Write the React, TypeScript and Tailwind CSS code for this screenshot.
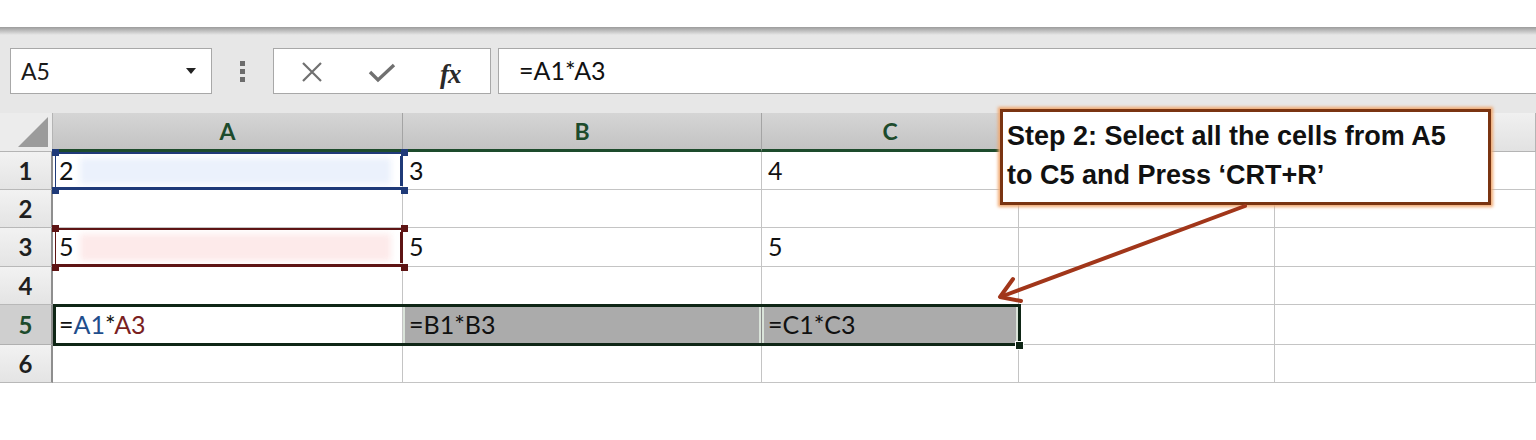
import React from 'react';

const cols = [53, 350, 359, 257, 256, 261];
const rowHeights = [38, 38, 39, 38, 40, 38];

const cellFont = { fontFamily: 'Lato, "Open Sans", sans-serif' };

type CellVal = React.ReactNode;

const data: CellVal[][] = [
  ['2', '3', '4', '', ''],
  ['', '', '', '', ''],
  ['5', '5', '5', '', ''],
  ['', '', '', '', ''],
  [
    <span key="f">
      =<span className="text-[#1f4e8c]">A1</span>*<span className="text-[#7a1f1f]">A3</span>
    </span>,
    '=B1*B3',
    '=C1*C3',
    '',
    '',
  ],
  ['', '', '', '', ''],
];

function Toolbar() {
  return (
    <div className="h-[86px] bg-[#e7e7e7]">
      <div className="h-[8px] bg-linear-to-b from-[#9c9c9c] to-[#e7e7e7]" />
      <div className="flex items-start pt-[13px]">
        {/* name box */}
        <div className="ml-[10px] w-[202px] h-[46px] border border-[#a8a8a8] bg-white flex items-center justify-between pl-[10px] pr-[14px]">
          <span className="text-[23px] text-[#1a1a1a]" style={cellFont}>A5</span>
          <svg width="12" height="8" viewBox="0 0 12 8">
            <path d="M1 1 L11 1 L6 7 Z" fill="#222" />
          </svg>
        </div>
        {/* dots */}
        <div className="w-[61px] h-[46px] flex flex-col items-center justify-center gap-[3px]">
          <div className="w-[5px] h-[5px] bg-[#6c6c6c]" />
          <div className="w-[5px] h-[5px] bg-[#6c6c6c]" />
          <div className="w-[5px] h-[5px] bg-[#6c6c6c]" />
        </div>
        {/* buttons */}
        <div className="w-[218px] h-[46px] border border-[#a8a8a8] bg-white relative">
          <svg className="absolute left-[26px] top-[11px]" width="24" height="24" viewBox="0 0 24 24">
            <path d="M3 3 L21 21 M21 3 L3 21" stroke="#707070" strokeWidth="2.2" fill="none" />
          </svg>
          <svg className="absolute left-[94px] top-[11px]" width="28" height="24" viewBox="0 0 28 24">
            <path d="M2 12 L10 20 L26 5" stroke="#707070" strokeWidth="3.4" fill="none" />
          </svg>
          <span
            className="absolute left-[166px] top-[5px] text-[27px] font-bold italic text-[#2a2a2a] tracking-[-1px]"
            style={{ fontFamily: '"Liberation Serif", serif' }}
          >
            fx
          </span>
        </div>
        {/* formula box */}
        <div className="ml-[7px] flex-1 -mr-[4px] h-[46px] border border-[#a8a8a8] bg-white flex items-center pl-[20px]">
          <span className="text-[25px] text-[#111]" style={cellFont}>=A1*A3</span>
        </div>
      </div>
    </div>
  );
}

function HeaderRow() {
  const names = ['A', 'B', 'C', '', ''];
  return (
    <div className="flex h-[39px]">
      <div
        className="relative h-full bg-[#ececec] border-r border-b border-[#b4b4b4]"
        style={{ width: cols[0] }}
      >
        <svg className="absolute right-[4px] bottom-[4px]" width="30" height="30" viewBox="0 0 30 30">
          <path d="M30 0 L30 30 L0 30 Z" fill="#9b9b9b" />
        </svg>
      </div>
      {names.map((n, i) => {
        const sel = i < 3;
        return (
          <div
            key={i}
            className={
              sel
                ? 'h-full flex items-center justify-center bg-linear-to-b from-[#d5d5d5] to-[#c3c3c3] border-r border-[#a4a4a4] border-b-[3px] border-b-[#1d4b2c] text-[#1d4b2c] text-[23px] font-bold'
                : 'h-full flex items-center justify-center bg-linear-to-b from-[#f0f0f0] to-[#e2e2e2] border-r border-b border-[#b4b4b4] text-[#333] text-[23px]'
            }
            style={{ width: cols[i + 1], ...cellFont }}
          >
            {n}
          </div>
        );
      })}
    </div>
  );
}

function Row({ idx, h }: { idx: number; h: number }) {
  const isSel = idx === 4;
  return (
    <div className="flex" style={{ height: h }}>
      <div
        className={
          isSel
            ? 'h-full flex items-center justify-center bg-[#cfcfcf] text-[#1d4b2c] border-r-2 border-r-[#8e8e8e] border-b border-[#b0b0b0] text-[24px] font-bold'
            : 'h-full flex items-center justify-center bg-linear-to-b from-[#f2f2f2] to-[#e4e4e4] text-[#1f1f1f] border-r-2 border-r-[#8e8e8e] border-b border-[#b8b8b8] text-[24px] font-bold'
        }
        style={{ width: cols[0], ...cellFont }}
      >
        {idx + 1}
      </div>
      {data[idx].map((v, c) => {
        const gray = isSel && (c === 1 || c === 2);
        return (
          <div
            key={c}
            className={
              gray
                ? 'h-full flex items-center pl-[6px] bg-[#ababab] border-r border-[#8a8a8a] text-[25px] text-[#111] shadow-[inset_0_0_0_2px_#d9e3d9]'
                : 'h-full flex items-center pl-[6px] bg-white border-r border-b border-[#c4c4c4] text-[25px] text-[#111]'
            }
            style={{ width: cols[c + 1], ...cellFont }}
          >
            {v}
          </div>
        );
      })}
    </div>
  );
}

function Handle({ color, x, y }: { color: string; x: number; y: number }) {
  return (
    <div
      className="absolute w-[7px] h-[7px]"
      style={{ left: x - 3, top: y - 3, backgroundColor: color }}
    />
  );
}

function RangeMark({ top, h, color, fill }: { top: number; h: number; color: string; fill: string }) {
  return (
    <>
      <div className="absolute" style={{ left: 55, top, width: 348, height: h }}>
        <div className="absolute left-[25px] right-[12px] top-[6px] bottom-[6px] blur-[3px]" style={{ backgroundColor: fill }} />
        <div className="absolute left-0 right-0 top-0 h-[2px]" style={{ backgroundColor: color }} />
        <div className="absolute left-0 right-0 bottom-0 h-[3px]" style={{ backgroundColor: color }} />
        <div className="absolute right-0 top-[4px] bottom-[4px] w-[3px]" style={{ backgroundColor: color }} />
        <div className="absolute left-0 top-0 bottom-0 w-[1px]" style={{ backgroundColor: color }} />
      </div>
      <Handle color={color} x={55} y={top} />
      <Handle color={color} x={404} y={top} />
      <Handle color={color} x={55} y={top + h} />
      <Handle color={color} x={404} y={top + h} />
    </>
  );
}

export default function App() {
  return (
    <div className="relative w-full h-[440px] bg-white overflow-hidden">
      <div className="h-[27px] bg-white" />
      <Toolbar />

      <div className="relative">
        <HeaderRow />
        {rowHeights.map((h, i) => (
          <Row key={i} idx={i} h={h} />
        ))}

        {/* A1 reference */}
        <RangeMark top={39} h={38} color="#1f3a78" fill="#ebf1fc" />
        {/* A3 reference */}
        <RangeMark top={115} h={39} color="#5e1414" fill="#fdeaea" />

        {/* A5:C5 selection */}
        <div className="absolute left-[53px] top-[191px] w-[968px] h-[42px] border-[3px] border-[#0f2616]" />
        <div className="absolute left-[1015px] top-[228px] w-[9px] h-[9px] bg-[#0f2616] border border-white" />
      </div>

      {/* callout */}
      <div
        className="absolute left-[1000px] top-[109px] w-[491px] h-[96px] bg-white border-[3px] border-[#7a3411] shadow-[0_0_3px_2px_#f0a870] pl-[4px] pt-[5px] text-[27px] leading-[39px] font-bold text-[#111] whitespace-nowrap"
        style={{ fontFamily: '"Liberation Sans", Arial, sans-serif' }}
      >
        <div>Step 2: Select all the cells from A5</div>
        <div>to C5 and Press ‘CRT+R’</div>
      </div>

      {/* arrow */}
      <svg className="absolute left-0 top-0 pointer-events-none" width="1536" height="440">
        <line x1="1245" y1="206" x2="1003" y2="296" stroke="#a1361a" strokeWidth="4" strokeLinecap="round" />
        <polyline points="1013,279 1000,297 1021,301" fill="none" stroke="#a1361a" strokeWidth="4" strokeLinecap="round" strokeLinejoin="round" />
      </svg>
    </div>
  );
}
